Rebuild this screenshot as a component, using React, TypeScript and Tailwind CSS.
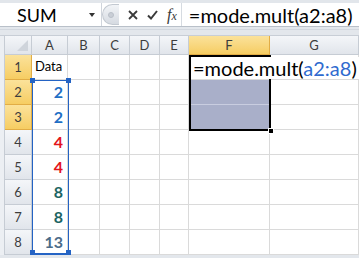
import React from "react";

const cols = ["A", "B", "C", "D", "E", "F", "G"];
const data: { v: string; c: string }[] = [
  { v: "2", c: "text-[#1f6fc5]" },
  { v: "2", c: "text-[#1f6fc5]" },
  { v: "4", c: "text-[#e3141c]" },
  { v: "4", c: "text-[#e3141c]" },
  { v: "8", c: "text-[#1b6463]" },
  { v: "8", c: "text-[#1b6463]" },
  { v: "13", c: "text-[#4b6b89]" },
];

const hdrGray =
  "bg-gradient-to-b from-[#f4f6f9] to-[#e1e5eb] border-r border-b border-[#c6ccd4] text-[#3d3d3d]";
const hdrGold =
  "bg-gradient-to-b from-[#fbe29a] to-[#f6cd62] border-r border-b border-[#e2ad45] text-[#3d3d3d]";

function Handle({ cls }: { cls: string }) {
  return <div className={`absolute w-[5px] h-[5px] bg-[#2463c4] ${cls}`} />;
}

export default function App() {
  return (
    <div className="w-[359px] h-[258px] overflow-hidden bg-[#e3e7ec] font-['Lato','Liberation_Sans',sans-serif] flex flex-col">
      {/* formula bar */}
      <div className="h-[27px] bg-white border-t-[3px] border-[#e2e6eb] border-b border-b-[#b9c0c9] flex items-stretch">
        <div className="w-[100px] ml-[2px] flex items-center justify-between pl-[15px] pr-[6px] border-r border-[#d0d5dc]">
          <span className="text-[18px] leading-none text-black">SUM</span>
          <span className="w-0 h-0 border-l-[3px] border-r-[3px] border-t-[4px] border-l-transparent border-r-transparent border-t-[#333]" />
        </div>
        <div className="w-[17px] my-[1px] rounded-l-full bg-gradient-to-b from-[#f2f4f7] to-[#d5dae1] border border-r-0 border-[#c3c9d1] flex items-center justify-center">
          <span className="w-[6px] h-[6px] rounded-full bg-[#c9ced6] border border-[#b9bfc8]" />
        </div>
        <div className="flex items-center gap-[9px] pl-[9px] pr-[4px]">
          <svg width="10" height="10" viewBox="0 0 10 10">
            <path d="M1 1L9 9M9 1L1 9" stroke="#3a3a3a" strokeWidth="1.8" />
          </svg>
          <svg width="11" height="10" viewBox="0 0 11 10">
            <path d="M1 5.5L4 8.5L10 1" stroke="#3a3a3a" strokeWidth="2" fill="none" />
          </svg>
          <span className="font-['Liberation_Serif',serif] italic text-[16px] leading-none text-[#3a3a3a]">
            f<span className="text-[12px]">x</span>
          </span>
        </div>
        <div className="flex-1 flex items-center pl-[7px] border-l border-[#d6dbe1]">
          <span className="text-[20px] leading-none text-black whitespace-nowrap">=mode.mult(a2:a8)</span>
        </div>
      </div>
      {/* gap band */}
      <div className="h-[9px] border-b border-[#c8ced6] flex flex-col">
        <div className="h-[3px] border-b border-[#d3d8df]" />
      </div>
      {/* grid area */}
      <div className="flex">
        <div className="w-[5px] bg-[#eceff3] border-r border-[#c6ccd4]" />
        <div className="relative flex-1">
          <div className="grid grid-cols-[27px_36px_32px_30px_30px_29px_81px_1fr] grid-rows-[19px_repeat(8,25px)]">
            {/* header row */}
            <div className={`${hdrGray} flex items-end justify-end pr-[3px] pb-[3px]`}>
              <svg width="11" height="11" viewBox="0 0 11 11">
                <polygon points="11,0 11,11 0,11" fill="#cfd4db" />
              </svg>
            </div>
            {cols.map((c) => (
              <div
                key={c}
                className={`${c === "F" ? hdrGold : hdrGray} flex items-center justify-center text-[13px] leading-none`}
              >
                {c}
              </div>
            ))}
            {/* rows */}
            {Array.from({ length: 8 }).map((_, r) => {
              const rowNum = r + 1;
              return (
                <React.Fragment key={r}>
                  <div
                    className={`${rowNum <= 3 ? hdrGold : hdrGray} flex items-center justify-center text-[13px] leading-none`}
                  >
                    {rowNum}
                  </div>
                  {cols.map((c) => {
                    const isF = c === "F";
                    const fill = isF && (rowNum === 2 || rowNum === 3);
                    let content: React.ReactNode = null;
                    let extra = "";
                    if (c === "A") {
                      if (rowNum === 1) {
                        content = <span className="text-[13px] text-black pl-[3px]">Data</span>;
                        extra = "justify-start";
                      } else {
                        const d = data[rowNum - 2];
                        content = (
                          <span className={`text-[16px] font-bold pr-[4px] ${d.c}`}>{d.v}</span>
                        );
                        extra = "justify-end";
                      }
                    }
                    return (
                      <div
                        key={c}
                        className={`border-r border-b flex items-center ${extra} ${
                          fill ? "bg-[#a9afc9] border-[#c9cde0]" : "bg-white border-[#dadada]"
                        }`}
                      >
                        {content}
                      </div>
                    );
                  })}
                </React.Fragment>
              );
            })}
          </div>
          {/* range highlight A2:A8 */}
          <div className="absolute left-[27px] top-[44px] w-[37px] h-[175px] border border-b-2 border-[#2463c4] pointer-events-none" />
          <Handle cls="left-[25px] top-[42px]" />
          <Handle cls="left-[61px] top-[42px]" />
          <Handle cls="left-[25px] top-[214px]" />
          <Handle cls="left-[61px] top-[214px]" />
          {/* selection F1:F3 */}
          <div className="absolute left-[184px] top-[19px] w-[82px] h-[76px] border-2 border-black pointer-events-none" />
          <div className="absolute left-[263px] top-[92px] w-[6px] h-[6px] bg-black border border-white" />
          {/* overflowing formula text in F1 */}
          <div className="absolute left-[186px] top-[21px] w-[170px] h-[22px] bg-white flex items-center pl-[2px]">
            <span className="text-[20px] leading-none text-black whitespace-nowrap">
              =mode.mult(<span className="text-[#2f6bcf]">a2:a8</span>)
            </span>
          </div>
        </div>
      </div>
    </div>
  );
}
